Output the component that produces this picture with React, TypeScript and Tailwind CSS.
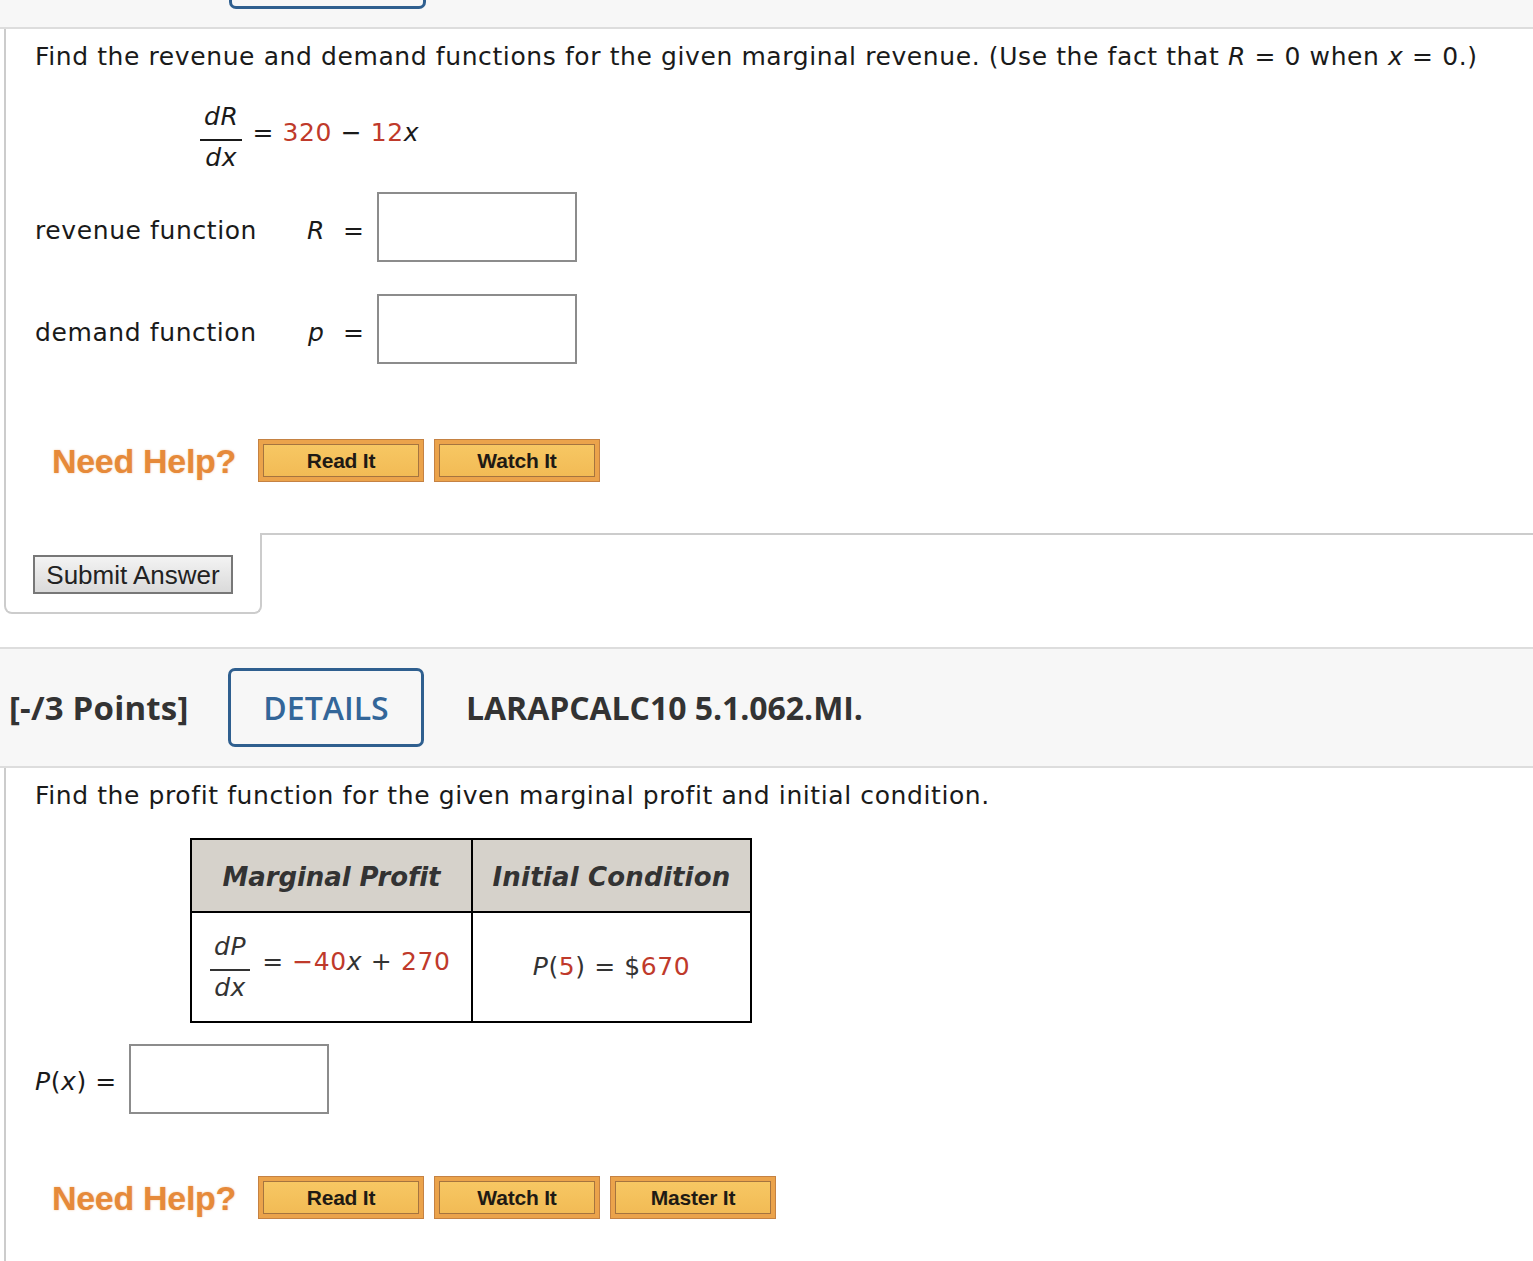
import React from "react";

const RED = "text-[#bf3a2b]";

function Frac({ top, bottom, color = "text-[#1a1a1a]" }: { top: React.ReactNode; bottom: React.ReactNode; color?: string }) {
  return (
    <span className={`inline-flex flex-col items-center ${color}`}>
      <span className="px-[4px] leading-[30px] italic">{top}</span>
      <span className="w-full border-t-2 border-current mt-[7px]" />
      <span className="px-[4px] pt-[2px] leading-[30px] italic">{bottom}</span>
    </span>
  );
}

function InputBox() {
  return <div className="w-[200px] h-[70px] border-2 border-[#8c8c8c] bg-white" />;
}

function HelpButton({ label }: { label: string }) {
  return (
    <div className="w-[166px] h-[43px] bg-[#eba34b] border border-[#c58243] p-[4px]">
      <div className="h-full border border-[#a5743f] bg-gradient-to-b from-[#f7c763] to-[#f2bb55] flex items-center justify-center font-['Liberation_Sans'] font-bold text-[21px] text-[#1f1a14] tracking-[-0.2px]">
        {label}
      </div>
    </div>
  );
}

function NeedHelp({ buttons }: { buttons: string[] }) {
  return (
    <div className="flex items-center ml-[17px]">
      <span className="w-[206px] font-['Liberation_Sans'] font-bold text-[34px] text-[#e68a3a] tracking-[-0.3px] leading-none [text-shadow:0_0_2px_rgba(230,138,58,0.5)]">
        Need Help?
      </span>
      <div className="flex gap-[10px]">
        {buttons.map((b) => (
          <HelpButton key={b} label={b} />
        ))}
      </div>
    </div>
  );
}

export default function App() {
  return (
    <div className="w-[1533px] h-[1261px] overflow-hidden bg-white font-['DejaVu_Sans',sans-serif] text-[25px] tracking-[0.6px] text-[#1a1a1a]">
      {/* top band (previous header) */}
      <div className="h-[29px] bg-[#f7f7f7] border-b-2 border-[#dddddd]">
        <div className="ml-[229px] w-[197px] h-[9px] border-x-[3px] border-b-[3px] border-[#2f5f8f] rounded-b-[7px]" />
      </div>

      {/* question 1 panel */}
      <div className="ml-[4px] border-l-2 border-[#cccccc] pl-[29px] pt-[13px] h-[504px]">
        <p className="leading-[30px] whitespace-nowrap">
          Find the revenue and demand functions for the given marginal revenue. (Use the fact that <i>R</i> = 0 when <i>x</i> = 0.)
        </p>
        <div className="flex items-center mt-[30px] ml-[165px]">
          <Frac top="dR" bottom="dx" />
          <span className="ml-[10px] -mt-[10px] whitespace-nowrap">
            = <span className={RED}>320</span> − <span className={RED}>12</span><i>x</i>
          </span>
        </div>
        <div className="flex items-center mt-[19px]">
          <span className="w-[272px] pt-[8px]">revenue function</span>
          <span className="w-[36px] italic pt-[8px]">R</span>
          <span className="w-[34px] pt-[8px]">=</span>
          <InputBox />
        </div>
        <div className="flex items-center mt-[32px]">
          <span className="w-[272px] pt-[8px]">demand function</span>
          <span className="w-[36px] italic pt-[8px] pl-[1px]">p</span>
          <span className="w-[34px] pt-[8px]">=</span>
          <InputBox />
        </div>
        <div className="mt-[75px]">
          <NeedHelp buttons={["Read It", "Watch It"]} />
        </div>
      </div>

      {/* submit tab */}
      <div className="flex">
        <div className="ml-[4px] w-[258px] h-[81px] border-l-2 border-r-2 border-b-2 border-[#cccccc] rounded-b-[8px] pl-[27px] pt-[22px]">
          <button className="w-[200px] h-[39px] border-2 border-[#777777] bg-gradient-to-b from-[#f3f3f3] to-[#dadada] font-['Liberation_Sans'] text-[26px] tracking-normal text-[#222222] leading-none">
            Submit Answer
          </button>
        </div>
        <div className="flex-1 border-t-2 border-[#cccccc]" />
      </div>

      {/* question 2 header band */}
      <div className="mt-[33px] h-[121px] bg-[#f7f7f7] border-y-2 border-[#dddddd] flex items-center font-['Open_Sans',sans-serif] tracking-normal text-[#333333]">
        <span className="ml-[9px] w-[178px] font-bold text-[33px] tracking-[0.2px] whitespace-nowrap">[-/3 Points]</span>
        <div className="ml-[41px] w-[196px] h-[79px] border-[3px] border-[#2f5f8f] rounded-[7px] flex items-center justify-center text-[#336699] text-[32px] font-semibold">
          DETAILS
        </div>
        <span className="ml-[42px] font-bold text-[32px] tracking-[-0.05px]">LARAPCALC10 5.1.062.MI.</span>
      </div>

      {/* question 2 panel */}
      <div className="ml-[4px] border-l-2 border-[#cccccc] pl-[29px] pt-[13px] h-[600px]">
        <p className="leading-[30px] whitespace-nowrap">Find the profit function for the given marginal profit and initial condition.</p>

        <table className="mt-[27px] ml-[155px] border-collapse border-2 border-black text-[#333333]">
          <thead>
            <tr className="bg-[#d6d2cb]">
              <th className="w-[281px] h-[73px] pt-[3px] border-2 border-black font-bold italic text-[26px] tracking-[-0.1px] text-center">Marginal Profit</th>
              <th className="w-[279px] h-[73px] pt-[3px] border-2 border-black font-bold italic text-[26px] tracking-[0.2px] text-center">Initial Condition</th>
            </tr>
          </thead>
          <tbody>
            <tr>
              <td className="h-[110px] border-2 border-black">
                <div className="flex items-center ml-[18px]">
                  <Frac top="dP" bottom="dx" color="text-[#333333]" />
                  <span className="ml-[12px] -mt-[10px] whitespace-nowrap">
                    = <span className={RED}>−40</span><i>x</i> + <span className={RED}>270</span>
                  </span>
                </div>
              </td>
              <td className="h-[110px] border-2 border-black text-center">
                <span className="whitespace-nowrap">
                  <i>P</i>(<span className={RED}>5</span>) = $<span className={RED}>670</span>
                </span>
              </td>
            </tr>
          </tbody>
        </table>

        <div className="flex items-center mt-[21px]">
          <span className="pt-[6px] mr-[12px]">
            <i>P</i>(<i>x</i>) =
          </span>
          <InputBox />
        </div>

        <div className="mt-[62px]">
          <NeedHelp buttons={["Read It", "Watch It", "Master It"]} />
        </div>
      </div>
    </div>
  );
}
